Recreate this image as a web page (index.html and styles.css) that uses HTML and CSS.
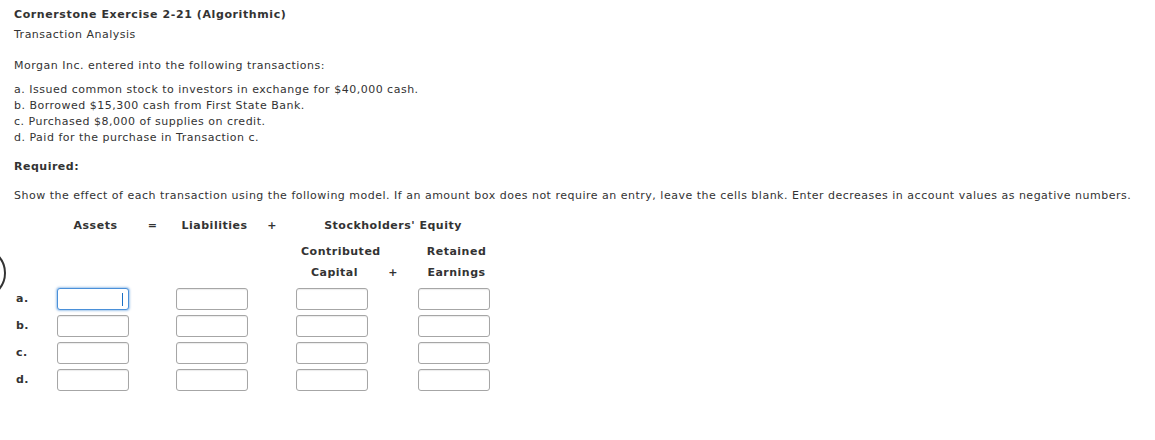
FILE: index.html
```html
<!DOCTYPE html>
<html>
<head>
<meta charset="utf-8">
<link rel="stylesheet" href="styles.css">
</head>
<body>
<svg class="edge-circle" width="8" height="40" viewBox="0 0 8 40"><circle cx="-20" cy="20" r="25" fill="none" stroke="#333" stroke-width="2"/></svg>
<div class="page">
  <h1 class="title">Cornerstone Exercise 2-21 (Algorithmic)</h1>
  <p class="subtitle">Transaction Analysis</p>
  <p class="intro">Morgan Inc. entered into the following transactions:</p>
  <ol class="list">
    <li>a. Issued common stock to investors in exchange for $40,000 cash.</li>
    <li>b. Borrowed $15,300 cash from First State Bank.</li>
    <li>c. Purchased $8,000 of supplies on credit.</li>
    <li>d. Paid for the purchase in Transaction c.</li>
  </ol>
  <p class="required">Required:</p>
  <p class="instr">Show the effect of each transaction using the following model. If an amount box does not require an entry, leave the cells blank. Enter decreases in account values as negative numbers.</p>
  <div class="model">
    <div class="mrow head">
      <div></div>
      <div class="hd">Assets</div>
      <div class="hd op">=</div>
      <div class="hd">Liabilities</div>
      <div class="hd op">+</div>
      <div class="hd span3">Stockholders' Equity</div>
    </div>
    <div class="mrow sub1">
      <div></div><div></div><div></div><div></div><div></div>
      <div class="hd">Contributed</div>
      <div></div>
      <div class="hd">Retained</div>
    </div>
    <div class="mrow sub2">
      <div></div><div></div><div></div><div></div><div></div>
      <div class="hd">Capital</div>
      <div class="hd op">+</div>
      <div class="hd">Earnings</div>
    </div>

    <div class="mrow entry first">
      <div class="lbl">a.</div>
      <div class="box focused"><span class="caret"></span></div><div></div>
      <div class="box"></div><div></div>
      <div class="box"></div><div></div>
      <div class="box"></div>
    </div>
    <div class="mrow entry">
      <div class="lbl">b.</div>
      <div class="box"></div><div></div>
      <div class="box"></div><div></div>
      <div class="box"></div><div></div>
      <div class="box"></div>
    </div>
    <div class="mrow entry">
      <div class="lbl">c.</div>
      <div class="box"></div><div></div>
      <div class="box"></div><div></div>
      <div class="box"></div><div></div>
      <div class="box"></div>
    </div>
    <div class="mrow entry">
      <div class="lbl">d.</div>
      <div class="box"></div><div></div>
      <div class="box"></div><div></div>
      <div class="box"></div><div></div>
      <div class="box"></div>
    </div>
  </div>
</div>
</body>
</html>
```
FILE: styles.css
```css
html, body {
  margin: 0;
  padding: 0;
  background: #fff;
}
body {
  font-family: "DejaVu Sans", Verdana, sans-serif;
  font-size: 11px;
  letter-spacing: 0.5px;
  color: #333;
  position: relative;
}
.edge-circle {
  position: absolute;
  left: 0;
  top: 253px;
}
.page {
  padding: 7px 14px 0 14px;
}
.title {
  font-size: 11px;
  font-weight: bold;
  margin: 0;
  line-height: 16px;
  letter-spacing: 0.6px;
}
.subtitle {
  margin: 4px 0 0 0;
  line-height: 16px;
}
.intro {
  margin: 15px 0 0 0;
  line-height: 16px;
}
.list {
  list-style: none;
  margin: 8px 0 0 0;
  padding: 0;
  line-height: 16px;
}
.required {
  font-weight: bold;
  margin: 13px 0 0 0;
  line-height: 16px;
}
.instr {
  margin: 13px 0 0 0;
  line-height: 16px;
}
.model {
  margin-top: 14px;
  font-weight: bold;
}
.mrow {
  display: grid;
  grid-template-columns: 43px 72px 47px 72px 48px 72px 50px 72px;
}
.head { height: 16px; }
.sub1 { height: 16px; margin-top: 10px; }
.sub2 { height: 16px; margin-top: 5px; }
.entry { height: 22px; margin-top: 5px; }
.entry.first { margin-top: 7px; }
.hd {
  text-align: center;
  line-height: 16px;
  padding-left: 5px;
  white-space: nowrap;
}
.hd.op { padding-left: 0; }
.span3 { grid-column: 6 / 9; padding-left: 0; }
.lbl {
  line-height: 22px;
  padding-left: 2px;
}
.box {
  box-sizing: border-box;
  height: 22px;
  border: 1px solid #a6a6a6;
  border-radius: 3px;
  box-shadow: inset 0 1px 1px rgba(0,0,0,0.08);
  position: relative;
  background: #fff;
}
.box.focused {
  border-color: #4a90d9;
  box-shadow: 0 0 2px 1px rgba(74,144,217,0.5);
}
.caret {
  position: absolute;
  right: 5px;
  top: 4px;
  width: 1px;
  height: 13px;
  background: #1a6fc4;
}
```
